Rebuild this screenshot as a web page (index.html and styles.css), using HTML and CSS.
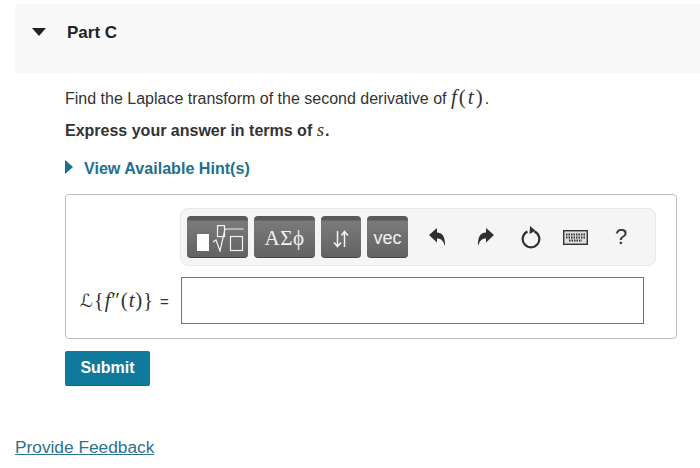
FILE: index.html
```html
<!DOCTYPE html>
<html lang="en">
<head>
<meta charset="utf-8">
<title>Part C</title>
<link rel="stylesheet" href="styles.css">
</head>
<body>
<section class="part">
  <header class="part-head">
    <svg class="caret-down" width="14" height="8" viewBox="0 0 14 8"><path d="M0 0H14L7 8Z"/></svg>
    <h2 class="part-title">Part C</h2>
  </header>
  <div class="part-body">
    <p class="prompt">Find the Laplace transform of the second derivative of <span class="math"><i>f</i>(<i>t</i>)</span>.</p>
    <p class="instruction">Express your answer in terms of <i class="math-s">s</i>.</p>
    <div class="hint">
      <svg class="caret-right" width="8" height="14" viewBox="0 0 8 14"><path d="M0 0L8 7L0 14Z"/></svg>
      <span class="hint-label">View Available Hint(s)</span>
    </div>
    <div class="answer">
      <div class="toolbar-row">
        <div class="toolbar">
          <div class="tool tool-templates">
            <span class="block"></span>
            <svg class="radical" width="31" height="27" viewBox="0 0 31 27" fill="none" stroke="#f2f2f2" stroke-width="1.2">
              <rect x="4.500" y=".6" width="7" height="11"/>
              <path d="M0 17L3 15L7 26L12 4H30.500"/>
              <rect x="17.500" y="11.500" width="12" height="14"/>
            </svg>
          </div>
          <div class="tool tool-greek">ΑΣϕ</div>
          <div class="tool tool-arrows">
            <svg width="18" height="18" viewBox="0 0 18 18" fill="none" stroke="#f2f2f2" stroke-width="1.5">
              <path d="M5.5 1V16M2 12.5L5.5 16.5L9 12.5"/>
              <path d="M12.5 17V2M9.5 5.5L12.5 1.5L16 5.5"/>
            </svg>
          </div>
          <div class="tool tool-vec">vec</div>
          <div class="actions">
            <svg width="17" height="19" viewBox="0 0 17 19" fill="#2f2f2f"><path d="M0 7L8 0V4.5C13 4.5 16.5 8 16 18.5C14.5 13 12.5 10.5 8 10.5V14.500Z"/></svg>
            <svg width="17" height="19" viewBox="0 0 17 19" fill="#2f2f2f"><path d="M17 7L9 0V4.5C4 4.500 .5 8 1 18.500C2.500 13 4.500 10.500 9 10.500V14.500Z"/></svg>
            <svg width="20" height="23" viewBox="0 0 20 23" fill="none" stroke="#2f2f2f" stroke-width="2.200"><path d="M6.500 5.500A8.300 8.300 0 1 0 13.500 5.500"/><path d="M9 0L14.500 4.800L8.500 8Z" fill="#2f2f2f" stroke="none"/></svg>
            <svg width="25" height="15" viewBox="0 0 25 15"><rect x=".7" y=".7" width="23.600" height="13.600" fill="#dedede" stroke="#333" stroke-width="1.400"/><path d="M3 4.500H22M3 7.500H22M6 10.500H19" stroke="#333" stroke-width="1.800" stroke-dasharray="1.500 1"/></svg>
            <span class="help">?</span>
          </div>
        </div>
      </div>
      <div class="equation">
        <span class="label"><span class="script-l">ℒ</span>{<i>f</i>″(<i>t</i>)} <span class="equals">=</span></span>
        <div class="input"></div>
      </div>
    </div>
    <button class="submit" type="button">Submit</button>
  </div>
</section>
<a class="feedback" href="#">Provide Feedback</a>
</body>
</html>
```
FILE: styles.css
```css
* { box-sizing: border-box; }
html, body { margin: 0; padding: 0; }
body {
  width: 700px;
  height: 468px;
  overflow: hidden;
  background: #fff;
  font-family: "Liberation Sans", Arial, sans-serif;
  font-size: 16px;
  color: #333;
  padding-top: 4px;
}
.part { margin-left: 15px; }
.part-head {
  height: 69px;
  background: #f9f9f9;
  display: flex;
  align-items: flex-start;
  padding: 20px 0 0 17px;
}
.caret-down { fill: #222; margin-top: 4px; }
.part-title {
  margin: 0 0 0 21px;
  font-size: 17px;
  line-height: 18px;
  font-weight: bold;
  color: #222;
}
.part-body { padding: 14px 23px 0 50px; }
.prompt { margin: 0; line-height: 20px; height: 20px; white-space: nowrap; }
.math { font-family: "Liberation Serif", serif; font-size: 21px; letter-spacing: 2px; }
.instruction { margin: 13px 0 0; line-height: 20px; font-weight: bold; }
.math-s { font-family: "Liberation Serif", serif; font-weight: normal; font-size: 19px; letter-spacing: 1px; }
.hint { display: flex; align-items: center; margin-top: 17px; height: 20px; }
.caret-right { fill: #1b6f8f; margin-top: -2px; }
.hint-label { margin-left: 11px; font-weight: bold; font-size: 16.100px; color: #20718f; }
.answer {
  margin-top: 16px;
  height: 145px;
  border: 1px solid #bdbdbd;
  border-radius: 4px;
  padding: 13px 20px 0 14px;
}
.toolbar-row { padding-left: 100px; }
.toolbar {
  height: 58px;
  width: 476px;
  background: #f5f5f5;
  border: 1px solid #e8e8e8;
  border-radius: 8px;
  display: flex;
  align-items: center;
  padding-left: 6px;
  gap: 6px;
}
.tool {
  height: 42px;
  border-radius: 4px;
  background: linear-gradient(#5a5a5a 0, #5a5a5a 4px, #7a7a7a 5px, #636363 100%);
  border-bottom: 1px solid #444;
  color: #f2f2f2;
  display: flex;
  align-items: center;
  justify-content: center;
}
.tool-templates { width: 61px; gap: 4px; padding-top: 3px; justify-content: flex-start; padding-left: 10px; }
.block { width: 12px; height: 17px; background: #fff; margin-top: 9px; }
.tool-greek { width: 61px; font-family: "Liberation Serif", serif; font-size: 21px; letter-spacing: .5px; padding-top: 3px; }
.tool-arrows { width: 40px; padding-top: 5px; }
.tool-vec { width: 41px; font-size: 18px; padding-top: 3px; }
.actions { display: flex; align-items: center; margin-left: 15px; }
.actions svg:nth-child(1) { margin-right: 31px; }
.actions svg:nth-child(2) { margin-right: 27px; }
.actions svg:nth-child(3) { margin-right: 22px; }
.actions svg:nth-child(4) { margin-right: 27px; }
.help { font-size: 22px; color: #333; }
.equation { display: flex; align-items: center; margin-top: 11px; }
.label {
  width: 101px;
  font-family: "Liberation Serif", serif;
  font-size: 21px;
  letter-spacing: .8px;
  color: #333;
  white-space: nowrap;
}
.script-l { font-family: "DejaVu Sans", serif; font-size: 18px; }
.equals { font-family: "Liberation Sans", sans-serif; font-size: 15px; letter-spacing: 0; }
.input {
  width: 463px;
  height: 47px;
  border: 1px solid #2f8ca5;
  background: #fff;
}
.submit {
  display: block;
  margin-top: 12px;
  width: 85px;
  height: 35px;
  background: #0f7a9c;
  border: 0;
  border-bottom: 1px solid #0b6a88;
  border-radius: 2px;
  color: #fff;
  font: bold 16px "Liberation Sans", Arial, sans-serif;
  padding: 0;
}
.feedback {
  display: inline-block;
  margin: 51px 0 0 15px;
  color: #2a7391;
  font-size: 17.300px;
  line-height: 20px;
  text-decoration: underline;
}
```
